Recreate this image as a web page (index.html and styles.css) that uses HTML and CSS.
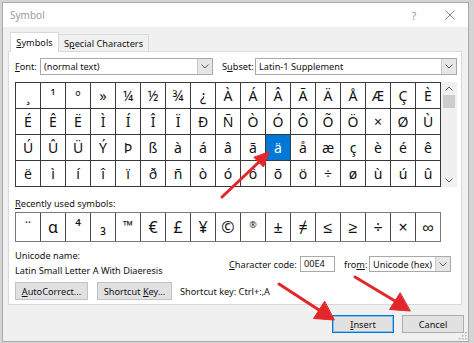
FILE: index.html
```html
<!DOCTYPE html>
<html>
<head>
<meta charset="utf-8">
<title>Symbol</title>
<link rel="stylesheet" href="styles.css">
</head>
<body>
<div class="dialog">
  <div class="titlebar">
    <span class="title">Symbol</span>
    <span class="tb-btn help">?</span>
    <span class="tb-btn close"><svg width="10" height="10" viewBox="0 0 10 10"><path d="M0.5 0.5 L9.5 9.5 M9.5 0.5 L0.5 9.5" stroke="#8a8a8a" stroke-width="1" fill="none"/></svg></span>
  </div>
  <div class="body">
    <div class="tabs">
      <div class="tab active"><span><u>S</u>ymbols</span></div>
      <div class="tab special"><span>S<u>p</u>ecial Characters</span></div>
    </div>
    <div class="panel">
      <div class="font-row">
        <span class="font-label"><u>F</u>ont:</span>
        <div class="select font-select"><span class="sel-text">(normal text)</span><span class="arrow"><svg width="8" height="5" viewBox="0 0 8 5"><path d="M0.5 0.5 L4 4 L7.5 0.5" fill="none" stroke="#5a5a5a"/></svg></span></div>
        <span class="subset-label">S<u>u</u>bset:</span>
        <div class="select subset-select"><span class="sel-text">Latin-1 Supplement</span><span class="arrow"><svg width="8" height="5" viewBox="0 0 8 5"><path d="M0.5 0.5 L4 4 L7.5 0.5" fill="none" stroke="#5a5a5a"/></svg></span></div>
      </div>
      <div class="grid-wrap">
        <div class="grid">
          <span class="cell">¸</span><span class="cell">¹</span><span class="cell">º</span><span class="cell">»</span><span class="cell">¼</span><span class="cell">½</span><span class="cell">¾</span><span class="cell">¿</span><span class="cell">À</span><span class="cell">Á</span><span class="cell">Â</span><span class="cell">Ã</span><span class="cell">Ä</span><span class="cell">Å</span><span class="cell">Æ</span><span class="cell">Ç</span><span class="cell">È</span>
          <span class="cell">É</span><span class="cell">Ê</span><span class="cell">Ë</span><span class="cell">Ì</span><span class="cell">Í</span><span class="cell">Î</span><span class="cell">Ï</span><span class="cell">Ð</span><span class="cell">Ñ</span><span class="cell">Ò</span><span class="cell">Ó</span><span class="cell">Ô</span><span class="cell">Õ</span><span class="cell">Ö</span><span class="cell">×</span><span class="cell">Ø</span><span class="cell">Ù</span>
          <span class="cell">Ú</span><span class="cell">Û</span><span class="cell">Ü</span><span class="cell">Ý</span><span class="cell">Þ</span><span class="cell">ß</span><span class="cell">à</span><span class="cell">á</span><span class="cell">â</span><span class="cell">ã</span><span class="cell sel">ä</span><span class="cell">å</span><span class="cell">æ</span><span class="cell">ç</span><span class="cell">è</span><span class="cell">é</span><span class="cell">ê</span>
          <span class="cell">ë</span><span class="cell">ì</span><span class="cell">í</span><span class="cell">î</span><span class="cell">ï</span><span class="cell">ð</span><span class="cell">ñ</span><span class="cell">ò</span><span class="cell">ó</span><span class="cell">ô</span><span class="cell">õ</span><span class="cell">ö</span><span class="cell">÷</span><span class="cell">ø</span><span class="cell">ù</span><span class="cell">ú</span><span class="cell">û</span>
        </div>
        <div class="scrollbar">
          <span class="sb-up"><svg width="8" height="5" viewBox="0 0 8 5"><path d="M0.5 4.5 L4 1 L7.5 4.5" fill="none" stroke="#606060"/></svg></span>
          <span class="sb-thumb"></span>
          <span class="sb-down"><svg width="8" height="5" viewBox="0 0 8 5"><path d="M0.5 0.5 L4 4 L7.5 0.5" fill="none" stroke="#606060"/></svg></span>
        </div>
      </div>
      <div class="recent-label"><u>R</u>ecently used symbols:</div>
      <div class="recent">
        <span class="rcell">¨</span><span class="rcell">α</span><span class="rcell">⁴</span><span class="rcell">₃</span><span class="rcell small">™</span><span class="rcell">€</span><span class="rcell">£</span><span class="rcell">¥</span><span class="rcell">©</span><span class="rcell tiny">®</span><span class="rcell">±</span><span class="rcell">≠</span><span class="rcell">≤</span><span class="rcell">≥</span><span class="rcell">÷</span><span class="rcell">×</span><span class="rcell">∞</span>
      </div>
      <div class="info-row">
        <div class="name-col">
          <div class="line">Unicode name:</div>
          <div class="line">Latin Small Letter A With Diaeresis</div>
        </div>
        <div class="code-group">
          <span class="code-label"><u>C</u>haracter code:</span>
          <span class="code-input">00E4</span>
          <span class="from-label">fro<u>m</u>:</span>
          <div class="select from-select"><span class="sel-text">Unicode (hex)</span><span class="arrow"><svg width="8" height="5" viewBox="0 0 8 5"><path d="M0.5 0.5 L4 4 L7.5 0.5" fill="none" stroke="#5a5a5a"/></svg></span></div>
        </div>
      </div>
      <div class="btn-row">
        <span class="btn auto"><span><u>A</u>utoCorrect...</span></span>
        <span class="btn shortcut"><span>Shortcut <u>K</u>ey...</span></span>
        <span class="shortcut-text">Shortcut key: Ctrl+:,A</span>
      </div>
    </div>
    <div class="footer">
      <span class="btn insert"><span><u>I</u>nsert</span></span>
      <span class="btn cancel"><span>Cancel</span></span>
    </div>
  </div>
  <svg class="grip" width="8" height="8" viewBox="0 0 8 8"><g fill="#b0b0b0"><rect x="6" y="0" width="1.5" height="1.5"/><rect x="3" y="3" width="1.5" height="1.5"/><rect x="6" y="3" width="1.5" height="1.5"/><rect x="0" y="6" width="1.5" height="1.5"/><rect x="3" y="6" width="1.5" height="1.5"/><rect x="6" y="6" width="1.5" height="1.5"/></g></svg>
</div>
<svg class="arrows" width="474" height="343" viewBox="0 0 474 343">
  <g stroke="#e3262b" stroke-width="3" stroke-linecap="round" fill="#e3262b">
    <line x1="222" y1="197" x2="259" y2="162"/>
    <polygon stroke-width="1" points="269,152 263.5,167 254,157.5"/>
    <line x1="279" y1="284" x2="319" y2="310"/>
    <polygon stroke-width="1" points="334,320 313.5,318.5 324.5,301.5"/>
    <line x1="355" y1="277" x2="395" y2="301"/>
    <polygon stroke-width="1" points="410,311 389.5,309.5 400,293"/>
  </g>
</svg>
</body>
</html>
```

FILE: styles.css
```css
* { box-sizing: border-box; }
html, body { margin: 0; padding: 0; }
body {
  width: 474px;
  height: 343px;
  overflow: hidden;
  position: relative;
  background: #d4d4d4;
  font-family: "Noto Sans", sans-serif;
  font-size: 9.2px;
  color: #111111;
}
u { text-decoration: underline; text-underline-offset: 1px; }

.dialog {
  position: relative;
  margin: 2px 0 0 2px;
  width: 467px;
  height: 340px;
  background: #f0f0f0;
  border: 1px solid #a9a9a9;
}

.titlebar {
  height: 24px;
  background: #ffffff;
  display: flex;
  align-items: center;
  padding-left: 7px;
}
.title { flex: 1; color: #9a9a9a; font-size: 10px; }
.tb-btn {
  width: 36px;
  height: 24px;
  display: flex;
  align-items: center;
  justify-content: center;
  color: #9a9a9a;
  font-size: 11px;
}

.body { padding: 5px 6px 0 5px; }

.tabs {
  position: relative;
  z-index: 1;
  display: flex;
  align-items: flex-end;
  height: 19px;
  padding-left: 2px;
}
.tab {
  height: 17px;
  display: flex;
  align-items: center;
  justify-content: center;
  border: 1px solid #d9d9d9;
  border-bottom: none;
  background: #f0f0f0;
}
.tab.active {
  width: 49px;
  height: 20px;
  margin-bottom: -1px;
  background: #ffffff;
}
.tab.special { width: 90px; border-left: none; }

.panel {
  height: 254px;
  border: 1px solid #d9d9d9;
  background: #ffffff;
  padding: 6px 4px 0 6px;
}

.font-row { display: flex; align-items: center; height: 17px; }
.font-label { width: 25px; }
.subset-label { margin-left: 9px; width: 33px; }

.select {
  height: 17px;
  border: 1px solid #a9a9a9;
  background: #ffffff;
  display: flex;
  align-items: center;
  padding-left: 3px;
}
.sel-text { flex: 1; white-space: nowrap; overflow: hidden; }
.arrow {
  width: 15px;
  height: 15px;
  flex: none;
  background: #e6e6e6;
  border-left: 1px solid #c9c9c9;
  display: flex;
  align-items: center;
  justify-content: center;
}
.font-select { width: 173px; }
.subset-select { width: 202px; }

.grid-wrap { display: flex; margin-top: 7px; height: 105px; }
.grid {
  display: grid;
  grid-template-columns: repeat(17, 24px);
  grid-auto-rows: 25px;
  gap: 1px;
  background: #3a3a3a;
  border: 1px solid #3a3a3a;
  width: 426px;
  height: 105px;
}
.cell {
  background: #ffffff;
  display: flex;
  align-items: center;
  justify-content: center;
  font-size: 14px;
  color: #111111;
}
.cell.sel { background: #0078d7; color: #ffffff; }

.scrollbar {
  width: 16px;
  background: #f0f0f0;
  display: flex;
  flex-direction: column;
  align-items: center;
}
.sb-up { height: 13px; display: flex; align-items: center; justify-content: center; }
.sb-thumb { width: 12px; height: 13px; background: #cdcdcd; }
.sb-down { margin-top: auto; height: 13px; display: flex; align-items: center; justify-content: center; }

.recent-label { margin-top: 10px; height: 14px; line-height: 14px; }
.recent {
  margin-top: 1px;
  display: grid;
  grid-template-columns: repeat(17, 24px);
  grid-auto-rows: 28px;
  gap: 1px;
  background: #4a4a4a;
  border: 1px solid #7a7a7a;
  width: 426px;
  height: 30px;
}
.rcell {
  background: #ffffff;
  display: flex;
  align-items: center;
  justify-content: center;
  font-size: 16px;
  color: #111111;
}
.rcell.small { font-size: 13px; align-items: flex-start; padding-top: 3px; }
.rcell.tiny { font-size: 9px; align-items: flex-start; padding-top: 5px; }

.info-row { display: flex; margin-top: 6px; height: 30px; }
.name-col { width: 214px; }
.line { height: 15px; line-height: 15px; white-space: nowrap; }
.code-group { display: flex; align-items: center; margin-top: 8px; height: 16px; }
.code-label { width: 71px; white-space: nowrap; }
.code-input {
  width: 35px;
  height: 16px;
  border: 1px solid #a9a9a9;
  background: #ffffff;
  padding-left: 3px;
  line-height: 14px;
}
.from-label { margin-left: 9px; width: 25px; }
.from-select { width: 82px; height: 16px; }
.from-select .arrow { height: 14px; }

.btn-row { display: flex; align-items: center; margin-top: 4px; height: 18px; }
.btn {
  height: 18px;
  background: #e1e1e1;
  border: 1px solid #c2c2c2;
  display: flex;
  align-items: center;
  justify-content: center;
  white-space: nowrap;
}
.btn.auto { width: 73px; }
.btn.shortcut { width: 75px; margin-left: 9px; }
.shortcut-text { margin-left: 8px; white-space: nowrap; }

.footer {
  display: flex;
  justify-content: flex-end;
  gap: 8px;
  margin-top: 10px;
  margin-right: -2px;
}
.btn.insert, .btn.cancel { width: 62px; height: 18px; border-color: #adadad; }
.btn.insert { border-color: #0078d7; box-shadow: inset 0 0 0 1px rgba(0, 120, 215, 0.35); }

.grip { position: absolute; right: 1px; bottom: 1px; }

.arrows { position: absolute; left: 0; top: 0; pointer-events: none; }
```
